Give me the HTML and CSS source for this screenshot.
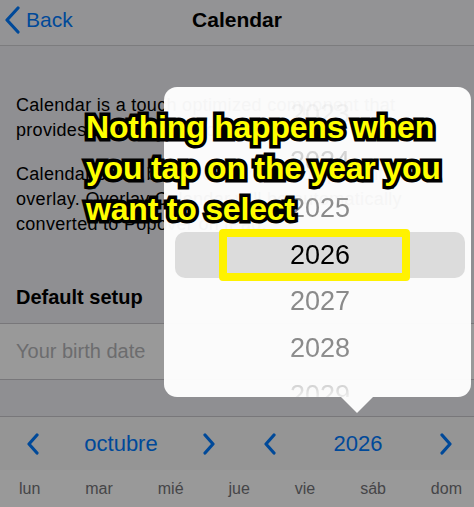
FILE: index.html
```html
<!DOCTYPE html>
<html lang="en">
<head>
    <meta charset="UTF-8">
    <meta name="viewport" content="width=device-width, initial-scale=1.0">
    <title>Calendar</title>
    <link rel="stylesheet" href="styles.css">
</head>
<body>

    <div class="page">
        <div class="navbar">
            <a class="back" href="#">
                <svg class="back-icon" width="17" height="28" viewBox="0 0 17 28">
                    <polyline points="14,2 3,14 14,26" />
                </svg>
                <span>Back</span>
            </a>
            <div class="title">Calendar</div>
        </div>

        <div class="content">
            <p>Calendar is a touch optimized component that provides an easy way to handle dates.</p>
            <p>Calendar could be used as inline component or as overlay. Overlay Calendar will be automatically converted to Popover on iPad.</p>

            <div class="block-title">Default setup</div>
            <div class="list-item">
                <input type="text" placeholder="Your birth date">
            </div>
        </div>

        <div class="calendar-sheet">
            <div class="calendar-toolbar">
                <div class="picker">
                    <svg class="arrow" width="14" height="22" viewBox="0 0 14 22"><polyline points="11,2 3,11 11,20" /></svg>
                    <span class="picker-value">octubre</span>
                    <svg class="arrow" width="14" height="22" viewBox="0 0 14 22"><polyline points="3,2 11,11 3,20" /></svg>
                </div>
                <div class="picker">
                    <svg class="arrow" width="14" height="22" viewBox="0 0 14 22"><polyline points="11,2 3,11 11,20" /></svg>
                    <span class="picker-value">2026</span>
                    <svg class="arrow" width="14" height="22" viewBox="0 0 14 22"><polyline points="3,2 11,11 3,20" /></svg>
                </div>
            </div>
            <div class="week-days">
                <span>lun</span>
                <span>mar</span>
                <span>mié</span>
                <span>jue</span>
                <span>vie</span>
                <span>sáb</span>
                <span>dom</span>
            </div>
        </div>
    </div>

    <!-- dimmed backdrop behind the year popover -->
    <div class="backdrop"></div>

    <div class="popover">
        <div class="years">
            <div class="year">2023</div>
            <div class="year">2024</div>
            <div class="year">2025</div>
            <div class="year selected">2026</div>
            <div class="year">2027</div>
            <div class="year">2028</div>
            <div class="year">2029</div>
        </div>
        <div class="popover-angle"></div>
    </div>

    <div class="highlight-box"></div>

    <div class="caption">Nothing happens when<br>you tap on the year you<br>want to select</div>

</body>
</html>
```

FILE: styles.css
```css
body {
    margin: 0;
    width: 474px;
    height: 507px;
    overflow: hidden;
    font-family: "Liberation Sans", Arial, sans-serif;
    background-color: #efeff4;
    position: relative;
}

.page {
    display: flex;
    flex-direction: column;
    height: 507px;
}

.navbar {
    height: 46px;
    box-sizing: border-box;
    padding-bottom: 5px;
    background-color: #f6f6f8;
    border-bottom: 1px solid #cfcfd3;
    display: flex;
    align-items: center;
    position: relative;
}

.back {
    display: flex;
    align-items: center;
    gap: 5px;
    padding-left: 4px;
    color: #007aff;
    text-decoration: none;
    font-size: 21px;
}

.back-icon polyline {
    fill: none;
    stroke: #007aff;
    stroke-width: 3.2;
    stroke-linecap: round;
    stroke-linejoin: round;
}

.title {
    position: absolute;
    left: 0;
    right: 0;
    text-align: center;
    font-size: 21px;
    font-weight: bold;
    color: #000;
    pointer-events: none;
}

.content {
    padding-top: 47px;
}

.content p {
    margin: 0 0 19px;
    padding: 0 16px;
    font-size: 18px;
    letter-spacing: 0.3px;
    line-height: 25px;
    color: #000;
}

.block-title {
    margin-top: 48px;
    padding: 0 16px;
    font-size: 20px;
    font-weight: bold;
    line-height: 24px;
    color: #000;
}

.list-item {
    margin-top: 14px;
    height: 55px;
    background-color: #fff;
    border-top: 1px solid #c8c7cc;
    border-bottom: 1px solid #c8c7cc;
    display: flex;
    align-items: center;
}

.list-item input {
    border: none;
    outline: none;
    background: transparent;
    padding: 0 16px;
    font-family: inherit;
    font-size: 20px;
    width: 100%;
}

.list-item input::placeholder {
    color: #b5b5b8;
}

.calendar-sheet {
    margin-top: auto;
    border-top: 1px solid #c8c7cc;
}

.calendar-toolbar {
    height: 53px;
    background-color: #f8f8f9;
    display: grid;
    grid-template-columns: 1fr 1fr;
}

.picker {
    display: flex;
    align-items: center;
    justify-content: space-between;
    padding: 0 21px 0 26px;
}

.picker-value {
    font-size: 22px;
    color: #007aff;
}

.arrow polyline {
    fill: none;
    stroke: #007aff;
    stroke-width: 3.2;
    stroke-linecap: round;
    stroke-linejoin: round;
}

.week-days {
    height: 37px;
    background-color: #fff;
    display: flex;
    justify-content: space-between;
    align-items: center;
    padding: 0 12px 0 19px;
    font-size: 16px;
    color: #747478;
}

.backdrop {
    position: absolute;
    inset: 0;
    background-color: rgba(0, 0, 0, 0.4);
}

.popover {
    position: absolute;
    left: 164px;
    top: 87px;
    width: 307px;
    height: 310px;
    background-color: rgba(255, 255, 255, 0.96);
    border-radius: 13px;
}

.years {
    height: 100%;
    padding-top: 4px;
    box-sizing: border-box;
    overflow: hidden;
    -webkit-mask-image: linear-gradient(to bottom, rgba(0,0,0,0.04) 0%, rgba(0,0,0,0.1) 10%, rgba(0,0,0,0.4) 24%, #000 38%, #000 86%, rgba(0,0,0,0.12) 100%);
    mask-image: linear-gradient(to bottom, rgba(0,0,0,0.04) 0%, rgba(0,0,0,0.1) 10%, rgba(0,0,0,0.4) 24%, #000 38%, #000 86%, rgba(0,0,0,0.12) 100%);
}

.year {
    height: 47px;
    line-height: 47px;
    margin: 0 6px 0 11px;
    text-align: center;
    font-size: 27px;
    color: #8a8a8a;
    border-radius: 10px;
}

.year.selected {
    background-color: #dcdcdc;
    color: #000;
    height: 46px;
    line-height: 46px;
}

.popover-angle {
    position: absolute;
    left: 177px;
    bottom: -16px;
    width: 0;
    height: 0;
    border-left: 16px solid transparent;
    border-right: 16px solid transparent;
    border-top: 16px solid rgba(255, 255, 255, 0.96);
}

.highlight-box {
    position: absolute;
    left: 219px;
    top: 229px;
    width: 175px;
    height: 36px;
    border: 8px solid #fff200;
    border-radius: 4px;
}

.caption {
    position: absolute;
    left: 86px;
    top: 107px;
    font-size: 32px;
    line-height: 41px;
    font-weight: bold;
    color: #ffff00;
    -webkit-text-stroke: 7px #000;
    paint-order: stroke fill;
    letter-spacing: -0.2px;
    white-space: nowrap;
}
```
